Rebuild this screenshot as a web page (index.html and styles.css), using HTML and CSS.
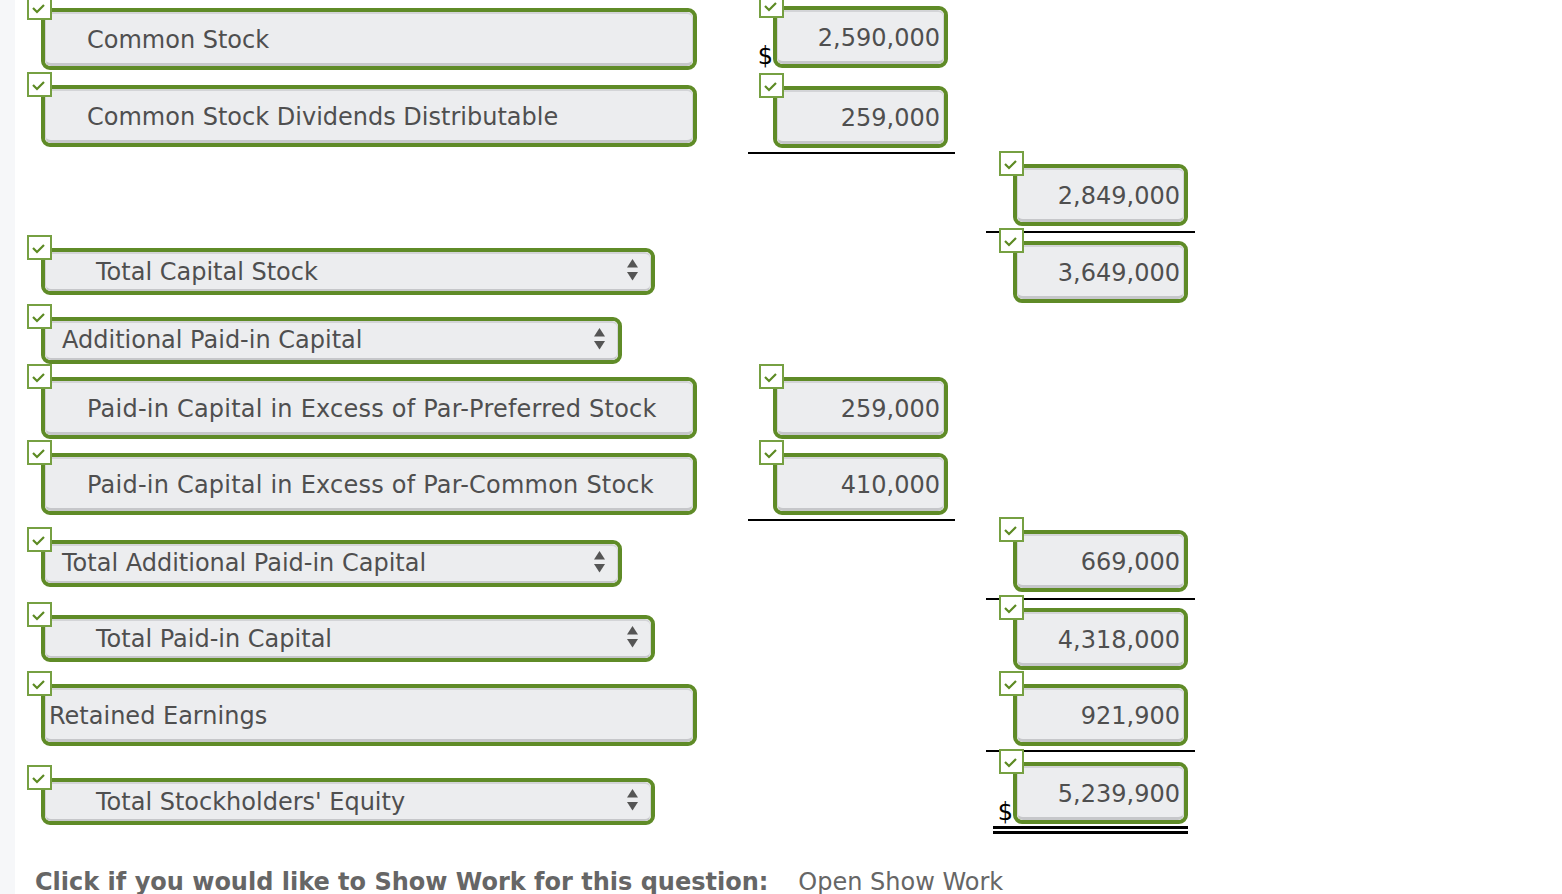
FILE: index.html
```html
<!DOCTYPE html>
<html lang="en">
<head>
<meta charset="utf-8">
<title>Stockholders' Equity</title>
<link rel="stylesheet" href="styles.css">
</head>
<body>
<div class="page">
  <div class="strip"></div>
  <main class="main">
    <div class="sheet">

      <div class="row h-a">
        <div class="c1"><div class="field txt"><span class="chk"><svg viewBox="0 0 21 21"><polyline points="4,11 8,15 15,8"/></svg></span><span class="inner pl-41">Common Stock</span></div></div>
        <div class="c2 top-6"><span class="dollar">$</span><div class="field num"><span class="chk"><svg viewBox="0 0 21 21"><polyline points="4,11 8,15 15,8"/></svg></span><span class="inner">2,590,000</span></div></div>
        <div class="c3"></div>
      </div>

      <div class="row h-b">
        <div class="c1"><div class="field txt"><span class="chk"><svg viewBox="0 0 21 21"><polyline points="4,11 8,15 15,8"/></svg></span><span class="inner pl-41">Common Stock Dividends Distributable</span></div></div>
        <div class="c2 line pb-4"><div class="field num"><span class="chk"><svg viewBox="0 0 21 21"><polyline points="4,11 8,15 15,8"/></svg></span><span class="inner">259,000</span></div></div>
        <div class="c3"></div>
      </div>

      <div class="row h-c">
        <div class="c1"></div>
        <div class="c2"></div>
        <div class="c3 line pb-5"><div class="field num"><span class="chk"><svg viewBox="0 0 21 21"><polyline points="4,11 8,15 15,8"/></svg></span><span class="inner">2,849,000</span></div></div>
      </div>

      <div class="row h-d">
        <div class="c1"><div class="field sel wide"><span class="chk"><svg viewBox="0 0 21 21"><polyline points="4,11 8,15 15,8"/></svg></span><span class="inner pl-50"><span class="label">Total Capital Stock</span><svg class="arrows" viewBox="0 0 11 22"><polygon points="5.5,0 11,8.5 0,8.5"/><polygon points="0,13 11,13 5.5,21.5"/></svg></span></div></div>
        <div class="c2"></div>
        <div class="c3 mid"><div class="field num"><span class="chk"><svg viewBox="0 0 21 21"><polyline points="4,11 8,15 15,8"/></svg></span><span class="inner">3,649,000</span></div></div>
      </div>

      <div class="row h-e">
        <div class="c1"><div class="field sel narrow"><span class="chk"><svg viewBox="0 0 21 21"><polyline points="4,11 8,15 15,8"/></svg></span><span class="inner pl-16"><span class="label">Additional Paid-in Capital</span><svg class="arrows" viewBox="0 0 11 22"><polygon points="5.5,0 11,8.5 0,8.5"/><polygon points="0,13 11,13 5.5,21.5"/></svg></span></div></div>
        <div class="c2"></div>
        <div class="c3"></div>
      </div>

      <div class="row h-f">
        <div class="c1"><div class="field txt"><span class="chk"><svg viewBox="0 0 21 21"><polyline points="4,11 8,15 15,8"/></svg></span><span class="inner pl-41 wide-text">Paid-in Capital in Excess of Par-Preferred Stock</span></div></div>
        <div class="c2 mid"><div class="field num"><span class="chk"><svg viewBox="0 0 21 21"><polyline points="4,11 8,15 15,8"/></svg></span><span class="inner">259,000</span></div></div>
        <div class="c3"></div>
      </div>

      <div class="row h-g">
        <div class="c1"><div class="field txt"><span class="chk"><svg viewBox="0 0 21 21"><polyline points="4,11 8,15 15,8"/></svg></span><span class="inner pl-41 wide-text">Paid-in Capital in Excess of Par-Common Stock</span></div></div>
        <div class="c2 line pb-4"><div class="field num"><span class="chk"><svg viewBox="0 0 21 21"><polyline points="4,11 8,15 15,8"/></svg></span><span class="inner">410,000</span></div></div>
        <div class="c3"></div>
      </div>

      <div class="row h-h">
        <div class="c1 nudge-5"><div class="field sel narrow"><span class="chk"><svg viewBox="0 0 21 21"><polyline points="4,11 8,15 15,8"/></svg></span><span class="inner pl-16"><span class="label">Total Additional Paid-in Capital</span><svg class="arrows" viewBox="0 0 11 22"><polygon points="5.5,0 11,8.5 0,8.5"/><polygon points="0,13 11,13 5.5,21.5"/></svg></span></div></div>
        <div class="c2"></div>
        <div class="c3 line pb-6"><div class="field num"><span class="chk"><svg viewBox="0 0 21 21"><polyline points="4,11 8,15 15,8"/></svg></span><span class="inner">669,000</span></div></div>
      </div>

      <div class="row h-i">
        <div class="c1"><div class="field sel wide"><span class="chk"><svg viewBox="0 0 21 21"><polyline points="4,11 8,15 15,8"/></svg></span><span class="inner pl-50"><span class="label">Total Paid-in Capital</span><svg class="arrows" viewBox="0 0 11 22"><polygon points="5.5,0 11,8.5 0,8.5"/><polygon points="0,13 11,13 5.5,21.5"/></svg></span></div></div>
        <div class="c2"></div>
        <div class="c3 mid"><div class="field num"><span class="chk"><svg viewBox="0 0 21 21"><polyline points="4,11 8,15 15,8"/></svg></span><span class="inner">4,318,000</span></div></div>
      </div>

      <div class="row h-j">
        <div class="c1"><div class="field txt"><span class="chk"><svg viewBox="0 0 21 21"><polyline points="4,11 8,15 15,8"/></svg></span><span class="inner pl-3">Retained Earnings</span></div></div>
        <div class="c2"></div>
        <div class="c3 line pb-4"><div class="field num"><span class="chk"><svg viewBox="0 0 21 21"><polyline points="4,11 8,15 15,8"/></svg></span><span class="inner">921,900</span></div></div>
      </div>

      <div class="row h-k">
        <div class="c1 top-26"><div class="field sel wide"><span class="chk"><svg viewBox="0 0 21 21"><polyline points="4,11 8,15 15,8"/></svg></span><span class="inner pl-50"><span class="label">Total Stockholders' Equity</span><svg class="arrows" viewBox="0 0 11 22"><polygon points="5.5,0 11,8.5 0,8.5"/><polygon points="0,13 11,13 5.5,21.5"/></svg></span></div></div>
        <div class="c2"></div>
        <div class="c3 total top-10"><span class="dollar">$</span><div class="field num"><span class="chk"><svg viewBox="0 0 21 21"><polyline points="4,11 8,15 15,8"/></svg></span><span class="inner">5,239,900</span></div></div>
      </div>

    </div>
    <p class="showwork"><b>Click if you would like to Show Work for this question:</b><span class="open">Open Show Work</span></p>
  </main>
</div>
</body>
</html>
```

FILE: styles.css
```css
html, body {
  margin: 0;
  padding: 0;
  background: #ffffff;
}

body {
  font-family: "DejaVu Sans", Verdana, sans-serif;
  font-size: 24px;
  color: #4f4f4f;
  overflow: hidden;
}

.page {
  display: flex;
  min-height: 894px;
}

.strip {
  width: 15px;
  flex: 0 0 15px;
  background: #f6f7f9;
}

.main {
  flex: 1;
  padding-left: 26px;
}

.row {
  display: grid;
  grid-template-columns: 707px 238px 209px;
}

.h-a { height: 78px; }
.h-b { height: 76px; }
.h-c { height: 79px; }
.h-d { height: 77px; }
.h-e { height: 60px; }
.h-f { height: 76px; }
.h-g { height: 75px; }
.h-h { height: 79px; }
.h-i { height: 77px; }
.h-j { height: 75px; }
.h-k { height: 88px; }

.c1 {
  align-self: center;
}

.c2, .c3 {
  display: flex;
  justify-content: flex-end;
  align-items: flex-end;
  padding-right: 7px;
  box-sizing: border-box;
}

.c2 { width: 207px; }
.c3 { width: 209px; }

.mid { align-self: center; }
.top-6 { align-self: start; margin-top: 6px; }
.top-10 { align-self: start; margin-top: 10px; }
.top-26 { align-self: start; margin-top: 26px; }
.nudge-5 { margin-top: 5px; }

.line {
  align-self: end;
  border-bottom: 2px solid #000;
}
.pb-4 { padding-bottom: 4px; }
.pb-5 { padding-bottom: 5px; }
.pb-6 { padding-bottom: 6px; }

.total {
  width: 195px;
  margin-left: 7px;
  padding-right: 0;
  padding-bottom: 2px;
  border-bottom: 8px double #000;
}

.dollar {
  color: #000;
  line-height: 24px;
}

/* fields */
.field {
  position: relative;
  box-sizing: border-box;
  border: 4px solid #5f8b27;
  border-radius: 9px;
  background: #ffffff;
}

.txt { width: 656px; height: 62px; }
.sel { height: 47px; }
.wide { width: 614px; }
.narrow { width: 581px; }
.num { width: 175px; height: 62px; }

.inner {
  display: flex;
  align-items: center;
  box-sizing: border-box;
  height: 100%;
  background: #ecedef;
  border: 1px solid #d2d3d6;
  border-top: 2px solid #d3d4d7;
  border-bottom: 3px solid #c6c7ca;
  border-radius: 6px;
  white-space: nowrap;
  color: #4f4f4f;
}

.txt .inner,
.num .inner {
  padding-top: 3px;
}

.wide-text {
  letter-spacing: 0.22px;
}

.num .inner {
  justify-content: flex-end;
  padding-right: 3px;
}

.sel .inner {
  justify-content: space-between;
  padding-right: 12px;
  border-bottom-width: 2px;
}

.pl-41 { padding-left: 41px; }
.pl-50 { padding-left: 50px; }
.pl-16 { padding-left: 16px; }
.pl-3 { padding-left: 3px; }

.arrows {
  width: 11px;
  height: 22px;
  fill: #555555;
  margin-top: -3px;
}

/* check badges */
.chk {
  position: absolute;
  top: -17px;
  left: -18px;
  width: 25px;
  height: 25px;
  box-sizing: border-box;
  border: 2px solid #76a042;
  background: #ffffff;
  z-index: 2;
}

.chk svg {
  display: block;
  width: 21px;
  height: 21px;
  fill: none;
  stroke: #5c8a22;
  stroke-width: 2.2;
}

/* footer */
.showwork {
  margin: 28px 0 0 -6px;
  font-size: 24px;
  color: #666666;
  white-space: nowrap;
}

.showwork b {
  font-weight: bold;
  color: #666666;
}

.open {
  margin-left: 30px;
  color: #666666;
}
```
